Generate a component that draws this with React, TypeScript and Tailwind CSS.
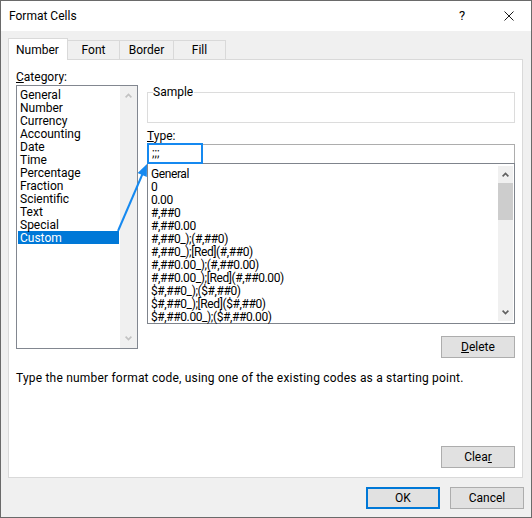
const categories = [
  'General',
  'Number',
  'Currency',
  'Accounting',
  'Date',
  'Time',
  'Percentage',
  'Fraction',
  'Scientific',
  'Text',
  'Special',
  'Custom',
];

const formats = [
  'General',
  '0',
  '0.00',
  '#,##0',
  '#,##0.00',
  '#,##0_);(#,##0)',
  '#,##0_);[Red](#,##0)',
  '#,##0.00_);(#,##0.00)',
  '#,##0.00_);[Red](#,##0.00)',
  '$#,##0_);($#,##0)',
  '$#,##0_);[Red]($#,##0)',
  '$#,##0.00_);($#,##0.00)',
];

const Chevron = ({ down = false, color }: { down?: boolean; color: string }) => (
  <svg width="7" height="5" viewBox="0 0 7 5" className={down ? 'rotate-180' : ''}>
    <polyline points="0.6,4.4 3.5,1.4 6.4,4.4" fill="none" stroke={color} strokeWidth="1.6" />
  </svg>
);

const Button = ({ children, primary = false }: { children: React.ReactNode; primary?: boolean }) => (
  <button
    className={
      primary
        ? 'w-[74px] h-[22px] bg-[#e1e1e1] border-2 border-[#0078d7] flex items-center justify-center leading-[16px]'
        : 'w-[74px] h-[22px] bg-[#e1e1e1] border border-[#adadad] flex items-center justify-center leading-[16px]'
    }
  >
    {children}
  </button>
);

export default function App() {
  return (
    <div className="relative w-[532px] h-[518px] border border-[#6a6a6a] bg-[#f0f0f0] flex flex-col text-[12px] text-black font-['Roboto','Segoe_UI',sans-serif]">
      {/* Title bar */}
      <div className="h-[30px] bg-white flex items-center pl-[8px] shrink-0">
        <span className="flex-1 leading-[16px]">Format Cells</span>
        <span className="w-[10px] text-center leading-[16px] mr-[37px] text-[13px]">?</span>
        <svg width="10" height="10" viewBox="0 0 10 10" className="mr-[17px]">
          <path d="M0.5 0.5 L9.5 9.5 M9.5 0.5 L0.5 9.5" stroke="#1a1a1a" strokeWidth="1" />
        </svg>
      </div>

      {/* Body */}
      <div className="pl-[7px] pr-[8px] pt-[7px] flex flex-col shrink-0">
        {/* Tabs */}
        <div className="relative z-10 flex items-start h-[22px] mb-[-1px]">
          <div className="w-[60px] h-[22px] bg-white border border-b-0 border-[#d9d9d9] pl-[7px] pt-[3px] leading-[16px]">
            Number
          </div>
          <div className="w-[52px] h-[19px] mt-[2px] border-t border-r border-[#d9d9d9] flex items-center justify-center leading-[16px]">
            Font
          </div>
          <div className="w-[54px] h-[19px] mt-[2px] border-t border-r border-[#d9d9d9] flex items-center justify-center leading-[16px]">
            Border
          </div>
          <div className="w-[52px] h-[19px] mt-[2px] border-t border-r border-[#d9d9d9] flex items-center justify-center leading-[16px]">
            Fill
          </div>
        </div>

        {/* Panel */}
        <div className="h-[419px] border border-[#d9d9d9] bg-white flex flex-col px-[7px] pt-[9px] pb-[9px]">
          <div className="flex gap-[9px]">
            {/* Category */}
            <div className="w-[122px] flex flex-col">
              <div className="leading-[16px]">
                <span className="underline">C</span>ategory:
              </div>
              <div className="h-[264px] border border-[#828790] flex">
                <div className="flex-1 pt-[2px]">
                  {categories.map((c) => (
                    <div
                      key={c}
                      className={
                        c === 'Custom'
                          ? 'mx-[1px] h-[13px] leading-[14px] pl-[2px] bg-[#0078d7] text-white'
                          : 'mx-[1px] h-[13px] leading-[14px] pl-[2px]'
                      }
                    >
                      {c}
                    </div>
                  ))}
                </div>
                <div className="w-[17px] bg-[#f0f0f0] flex flex-col justify-between items-center py-[7px]">
                  <Chevron color="#c2c2c2" />
                  <Chevron down color="#c2c2c2" />
                </div>
              </div>
            </div>

            {/* Type */}
            <div className="w-[368px] flex flex-col pt-[16px]">
              <fieldset className="h-[38px] border border-[#dcdcdc] px-[5px]">
                <legend className="leading-[14px] pr-[1px]">Sample</legend>
              </fieldset>
              <div className="leading-[16px] mt-[5px]">
                <span className="underline">T</span>ype:
              </div>
              <div className="relative h-[19px] border-t border-l border-r border-[#adadad] pl-[4px] leading-[17px]">
                ;;;
                <div className="absolute left-[-1px] top-[-2px] w-[56px] h-[21px] border-2 border-[#1589f0]" />
              </div>
              <div className="h-[161px] border border-[#7f848c] flex">
                <div className="flex-1 pt-[3px] pl-[3px] tracking-[-0.4px]">
                  {formats.map((f) => (
                    <div key={f} className="h-[13px] leading-[14px] whitespace-nowrap">
                      {f}
                    </div>
                  ))}
                </div>
                <div className="w-[15px] my-[2px] mr-[1px] bg-[#f0f0f0] flex flex-col">
                  <div className="h-[17px] flex items-center justify-center">
                    <Chevron color="#606060" />
                  </div>
                  <div className="h-[37px] bg-[#cdcdcd]" />
                  <div className="flex-1" />
                  <div className="h-[17px] flex items-center justify-center">
                    <Chevron down color="#606060" />
                  </div>
                </div>
              </div>
              <div className="self-end mt-[12px]">
                <Button>
                  <span className="underline">D</span>elete
                </Button>
              </div>
            </div>
          </div>

          <div className="mt-[12px] leading-[16px] tracking-[0.2px]">
            Type the number format code, using one of the existing codes as a starting point.
          </div>

          <div className="flex-1" />
          <div className="self-end">
            <Button>
              Clea<span className="underline">r</span>
            </Button>
          </div>
        </div>
      </div>

      {/* Footer */}
      <div className="flex justify-end gap-[10px] pt-[9px] pr-[7px]">
        <Button primary>OK</Button>
        <Button>Cancel</Button>
      </div>

      {/* Annotation arrow */}
      <svg className="absolute -left-px -top-px w-[532px] h-[518px] pointer-events-none" viewBox="0 0 532 518">
        <line x1="118" y1="231" x2="142.5" y2="174" stroke="#1589f0" strokeWidth="2" />
        <polygon points="147,164 137.6,173 146.8,177" fill="#1589f0" />
      </svg>
    </div>
  );
}
